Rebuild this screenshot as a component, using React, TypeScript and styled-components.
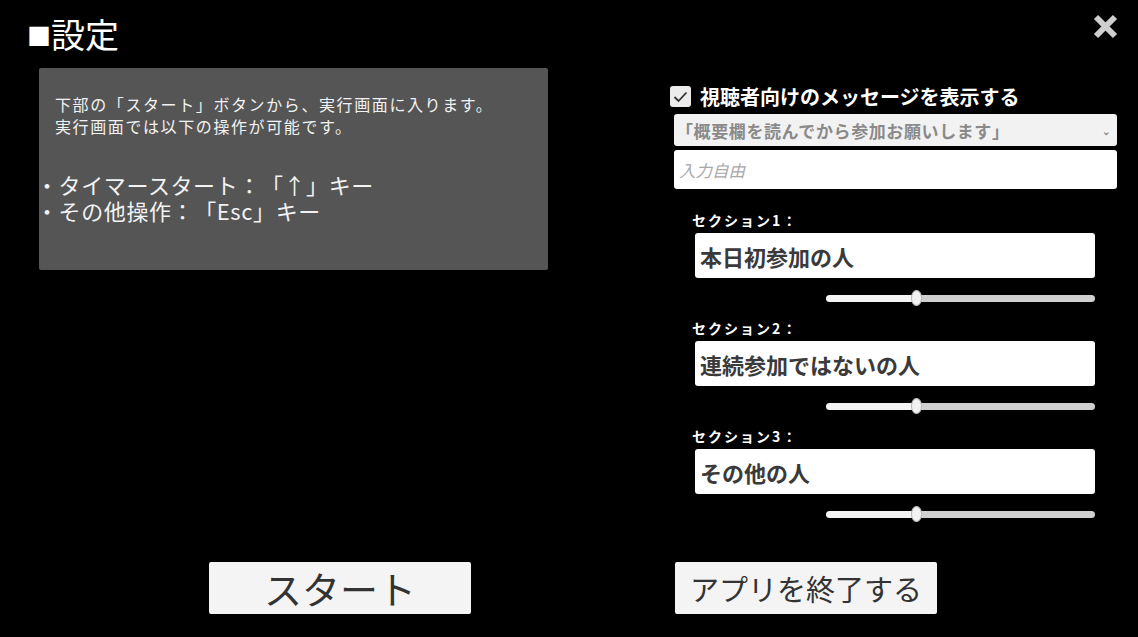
import styled, { createGlobalStyle } from 'styled-components';

/* Global */
const GlobalStyle = createGlobalStyle`
  html, body {
    margin: 0;
    padding: 0;
    background: #000;
  }
  * { box-sizing: border-box; }
  body {
    font-family: 'Noto Sans CJK JP', 'Noto Sans', sans-serif;
    text-spacing-trim: space-all;
  }
`;

/* Component Style */
const Page = styled.div`
  width: 1138px;
  height: 637px;
  background: #000;
  color: #fff;
  display: flex;
  flex-direction: column;
  overflow: hidden;
`;
const Header = styled.header`
  height: 68px;
  display: flex;
  justify-content: space-between;
  align-items: flex-start;
  padding: 13px 20px 0 27px;
`;
const Title = styled.h1`
  margin: 0;
  font-size: 34px;
  line-height: 42px;
  font-weight: 400;
  color: #fff;
  .mark {
    font-size: 24px;
    vertical-align: 3px;
  }
`;
const CloseBtn = styled.button`
  width: 25px;
  height: 25px;
  padding: 0;
  margin-top: 1px;
  border: none;
  background: transparent;
  cursor: pointer;
  svg { display: block; }
`;
const Main = styled.main`
  flex: 1;
  display: grid;
  grid-template-columns: 509px 447px;
  column-gap: 122px;
  align-items: start;
  padding-left: 39px;
`;
const InfoBox = styled.div`
  height: 202px;
  background: #555555;
  border-radius: 2px;
  padding: 25px 0 0 16px;
  color: #f2f2f2;
  .lead {
    margin: 0;
    font-size: 16px;
    letter-spacing: 1.6px;
    line-height: 22px;
  }
  .keys {
    margin: 34px 0 0 -19px;
    padding: 0;
    list-style: none;
    font-size: 22px;
    letter-spacing: 0.6px;
    line-height: 26px;
  }
`;
const Panel = styled.section`
  padding-top: 18px;
  display: flex;
  flex-direction: column;
`;
const CheckRow = styled.label`
  height: 21px;
  display: flex;
  align-items: center;
  gap: 9px;
  font-size: 20px;
  font-weight: 700;
  color: #fff;
`;
const CheckBox = styled.span`
  width: 21px;
  height: 21px;
  border-radius: 3px;
  background: #ececec;
  display: flex;
  align-items: center;
  justify-content: center;
`;
const Select = styled.div`
  margin: 7px 0 0 4px;
  height: 32px;
  background: #f2f2f2;
  border-radius: 3px;
  display: flex;
  align-items: center;
  justify-content: space-between;
  padding: 0 6px 0 2px;
  font-size: 17px;
  letter-spacing: 0.6px;
  font-weight: 700;
  color: #8a8a8a;
  .chev {
    font-size: 10px;
    color: #888;
  }
`;
const FreeInput = styled.div`
  margin: 4px 0 0 4px;
  height: 39px;
  background: #fff;
  border-radius: 3px;
  display: flex;
  align-items: center;
  padding-left: 5px;
  font-size: 16.5px;
  font-style: italic;
  color: #a8a8a8;
`;
const Sections = styled.div`
  margin-top: 22px;
  padding-left: 22px;
  width: 425px;
  display: flex;
  flex-direction: column;
`;
const Section = styled.div`
  display: flex;
  flex-direction: column;
  padding-bottom: 13px;
`;
const SectionLabel = styled.div`
  height: 18px;
  line-height: 18px;
  font-size: 14px;
  font-weight: 700;
  letter-spacing: 2px;
  color: #fff;
`;
const NameBox = styled.div`
  margin: 4px 0 0 3px;
  width: 400px;
  height: 45px;
  background: #fff;
  border-radius: 3px;
  display: flex;
  align-items: center;
  padding-left: 5px;
  font-size: 22px;
  font-weight: 700;
  color: #3a3a3a;
`;
const Slider = styled.div`
  margin-top: 12px;
  align-self: flex-end;
  width: 269px;
  height: 16px;
  position: relative;
  display: flex;
  align-items: center;
`;
const Track = styled.div`
  width: 100%;
  height: 7px;
  border-radius: 4px;
`;
const Thumb = styled.div`
  position: absolute;
  top: 0;
  width: 11px;
  height: 16px;
  margin-left: -5px;
  border-radius: 50%;
  background: #f2f2f2;
  border: 1px solid #b8b8b8;
`;
const Footer = styled.footer`
  display: flex;
  gap: 204px;
  padding: 0 0 23px 209px;
`;
const Button = styled.button<{ $size: number }>`
  width: 262px;
  height: 52px;
  border: none;
  border-radius: 2px;
  background: #f4f4f4;
  color: #333;
  font-family: 'Noto Sans CJK JP', sans-serif;
  font-size: ${(p) => p.$size}px;
  line-height: 1;
  padding: 0;
  cursor: pointer;
`;

interface SectionProps {
  no: number;
  name: string;
  value: number;
}

const SectionItem = ({ no, name, value }: SectionProps) => {
  const pct = value * 100;
  return (
    <Section>
      <SectionLabel>セクション{no}：</SectionLabel>
      <NameBox>{name}</NameBox>
      <Slider>
        <Track style={{ background: `linear-gradient(to right, #f4f4f4 ${pct}%, #cfcfcf ${pct}%)` }} />
        <Thumb style={{ left: `${pct}%` }} />
      </Slider>
    </Section>
  );
};

const sections = [
  { no: 1, name: '本日初参加の人', value: 0.335 },
  { no: 2, name: '連続参加ではないの人', value: 0.335 },
  { no: 3, name: 'その他の人', value: 0.335 },
];

const App = () => {
  return (
    <>
      <GlobalStyle />
      <Page>
        <Header>
          <Title><span className="mark">■</span>設定</Title>
          <CloseBtn aria-label="閉じる">
            <svg width="25" height="25" viewBox="0 0 25 25">
              <path d="M3 3 L22 22 M22 3 L3 22" stroke="#cfcfcf" strokeWidth="6" />
            </svg>
          </CloseBtn>
        </Header>
        <Main>
          <InfoBox>
            <p className="lead">
              下部の「スタート」ボタンから、実行画面に入ります。<br />
              実行画面では以下の操作が可能です。
            </p>
            <ul className="keys">
              <li>・タイマースタート：「↑」キー</li>
              <li>・その他操作：「Esc」キー</li>
            </ul>
          </InfoBox>
          <Panel>
            <CheckRow>
              <CheckBox>
                <svg width="15" height="12" viewBox="0 0 15 12">
                  <path d="M1.5 6 L5.5 10 L13.5 1.5" fill="none" stroke="#333" strokeWidth="1.8" />
                </svg>
              </CheckBox>
              視聴者向けのメッセージを表示する
            </CheckRow>
            <Select>
              <span>「概要欄を読んでから参加お願いします」</span>
              <span className="chev">⌄</span>
            </Select>
            <FreeInput>入力自由</FreeInput>
            <Sections>
              {sections.map((s) => (
                <SectionItem key={s.no} no={s.no} name={s.name} value={s.value} />
              ))}
            </Sections>
          </Panel>
        </Main>
        <Footer>
          <Button $size={38}>スタート</Button>
          <Button $size={29}>アプリを終了する</Button>
        </Footer>
      </Page>
    </>
  );
};

export default App;
